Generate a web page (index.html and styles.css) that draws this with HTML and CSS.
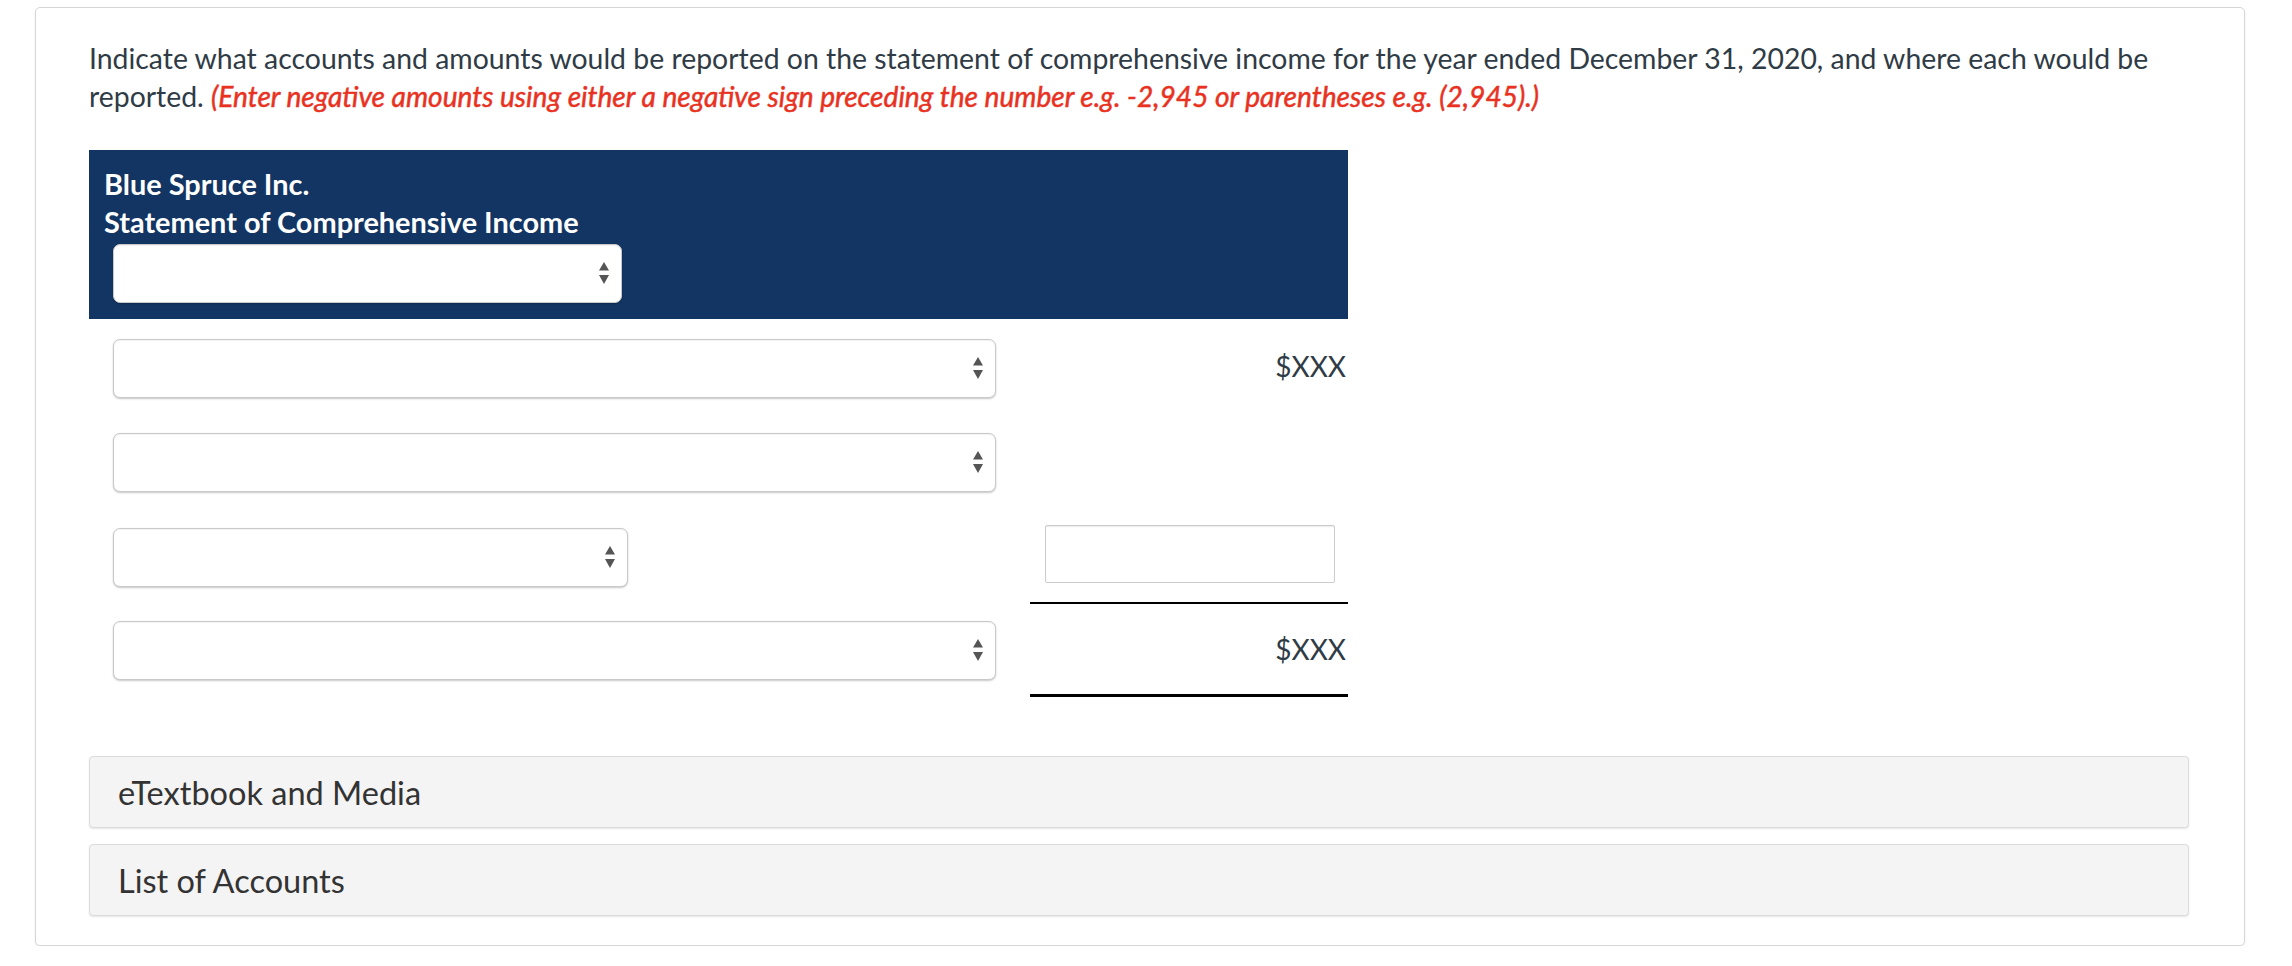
FILE: index.html
```html
<!DOCTYPE html>
<html lang="en">
<head>
<meta charset="utf-8">
<title>Statement of Comprehensive Income</title>
<link rel="stylesheet" href="styles.css">
</head>
<body>
<div class="card">
  <p class="question">Indicate what accounts and amounts would be reported on the statement of comprehensive income for the year ended December 31, 2020, and where each would be reported. <em class="hint">(Enter negative amounts using either a negative sign preceding the number e.g. -2,945 or parentheses e.g. (2,945).)</em></p>

  <div class="statement">
    <div class="head">
      <div class="title">Blue Spruce Inc.</div>
      <div class="title">Statement of Comprehensive Income</div>
      <div class="select select-head">
        <svg class="arrows" width="10" height="23" viewBox="0 0 10 23"><path d="M5 0 L10 8.5 L0 8.5 Z M0 13 L10 13 L5 22 Z" fill="#555"/></svg>
      </div>
    </div>

    <div class="row row1">
      <div class="cell-left">
        <div class="select select-wide">
          <svg class="arrows" width="10" height="23" viewBox="0 0 10 23"><path d="M5 0 L10 8.5 L0 8.5 Z M0 13 L10 13 L5 22 Z" fill="#555"/></svg>
        </div>
      </div>
      <div class="cell-amt amt-text">$XXX</div>
    </div>

    <div class="row row2">
      <div class="cell-left">
        <div class="select select-wide">
          <svg class="arrows" width="10" height="23" viewBox="0 0 10 23"><path d="M5 0 L10 8.5 L0 8.5 Z M0 13 L10 13 L5 22 Z" fill="#555"/></svg>
        </div>
      </div>
      <div class="cell-amt"></div>
    </div>

    <div class="row row3">
      <div class="cell-left">
        <div class="select select-short">
          <svg class="arrows" width="10" height="23" viewBox="0 0 10 23"><path d="M5 0 L10 8.5 L0 8.5 Z M0 13 L10 13 L5 22 Z" fill="#555"/></svg>
        </div>
      </div>
      <div class="cell-amt cell-input"><div class="input"></div></div>
    </div>

    <div class="row row4">
      <div class="cell-left">
        <div class="select select-wide">
          <svg class="arrows" width="10" height="23" viewBox="0 0 10 23"><path d="M5 0 L10 8.5 L0 8.5 Z M0 13 L10 13 L5 22 Z" fill="#555"/></svg>
        </div>
      </div>
      <div class="cell-amt amt-text total">$XXX</div>
    </div>
  </div>

  <div class="panel">eTextbook and Media</div>
  <div class="panel">List of Accounts</div>
</div>
</body>
</html>
```

FILE: styles.css
```css
html, body {
  margin: 0;
  padding: 0;
  background: #ffffff;
}

body {
  font-family: Lato, "Liberation Sans", sans-serif;
  color: #2f3b45;
}

.card {
  box-sizing: border-box;
  width: 2210px;
  margin: 7px 0 0 35px;
  padding: 31px 55px 29px 53px;
  border: 1px solid #d6d6d6;
  border-radius: 5px;
  box-shadow: 0 1px 2px rgba(0, 0, 0, 0.1);
}

.question {
  margin: 0;
  font-size: 28.4px;
  line-height: 38px;
  color: #2f3b45;
}

.hint {
  color: #e8321f;
  font-style: italic;
  font-weight: normal;
  font-size: 28.1px;
  -webkit-text-stroke: 0.5px #e8321f;
}

.statement {
  width: 1259px;
  margin-top: 35px;
}

.head {
  background: #133563;
  color: #ffffff;
  padding: 15px 0 16px 15px;
}

.title {
  font-size: 28.9px;
  line-height: 38px;
  font-weight: bold;
}

.select {
  box-sizing: border-box;
  height: 59px;
  background: #ffffff;
  border: 1px solid #c9c9c9;
  border-radius: 7px;
  box-shadow: 0 1px 2px rgba(0, 0, 0, 0.22), inset 0 1px 1px rgba(0, 0, 0, 0.05);
  display: flex;
  align-items: center;
  justify-content: flex-end;
  padding-right: 12px;
}

.arrows {
  display: block;
}

.select-head {
  width: 509px;
  margin: 3px 0 0 9px;
}

.select-wide {
  width: 883px;
}

.select-short {
  width: 515px;
}

.row {
  display: flex;
}

.cell-left {
  box-sizing: border-box;
  width: 941px;
  padding-left: 24px;
}

.cell-amt {
  box-sizing: border-box;
  width: 318px;
  text-align: right;
  font-size: 28px;
  line-height: 38px;
  color: #2f3b45;
  padding-right: 2px;
}

.row1 { height: 96px; }
.row1 .cell-left { padding-top: 20px; }
.row1 .cell-amt { padding-top: 28px; }

.row2 { height: 95px; }
.row2 .cell-left { padding-top: 18px; }

.row3 { height: 94px; }
.row3 .cell-left { padding-top: 18px; }

.cell-input {
  padding: 15px 13px 0 15px;
  border-bottom: 2px solid #000000;
}

.input {
  box-sizing: border-box;
  height: 58px;
  border: 1px solid #cccccc;
  border-radius: 2px;
  box-shadow: inset 0 1px 1px rgba(0, 0, 0, 0.08);
  background: #ffffff;
}

.row4 { height: 93px; }
.row4 .cell-left { padding-top: 17px; }
.row4 .cell-amt { padding-top: 26px; }

.total {
  border-bottom: 3px solid #000000;
}

.panel {
  box-sizing: border-box;
  height: 72px;
  margin-top: 16px;
  padding-left: 28px;
  display: flex;
  align-items: center;
  background: #f4f4f4;
  border: 1px solid #dcdcdc;
  border-radius: 4px;
  box-shadow: 0 1px 2px rgba(0, 0, 0, 0.1);
  font-size: 32.5px;
  color: #333333;
}

.statement + .panel {
  margin-top: 59px;
}
```
